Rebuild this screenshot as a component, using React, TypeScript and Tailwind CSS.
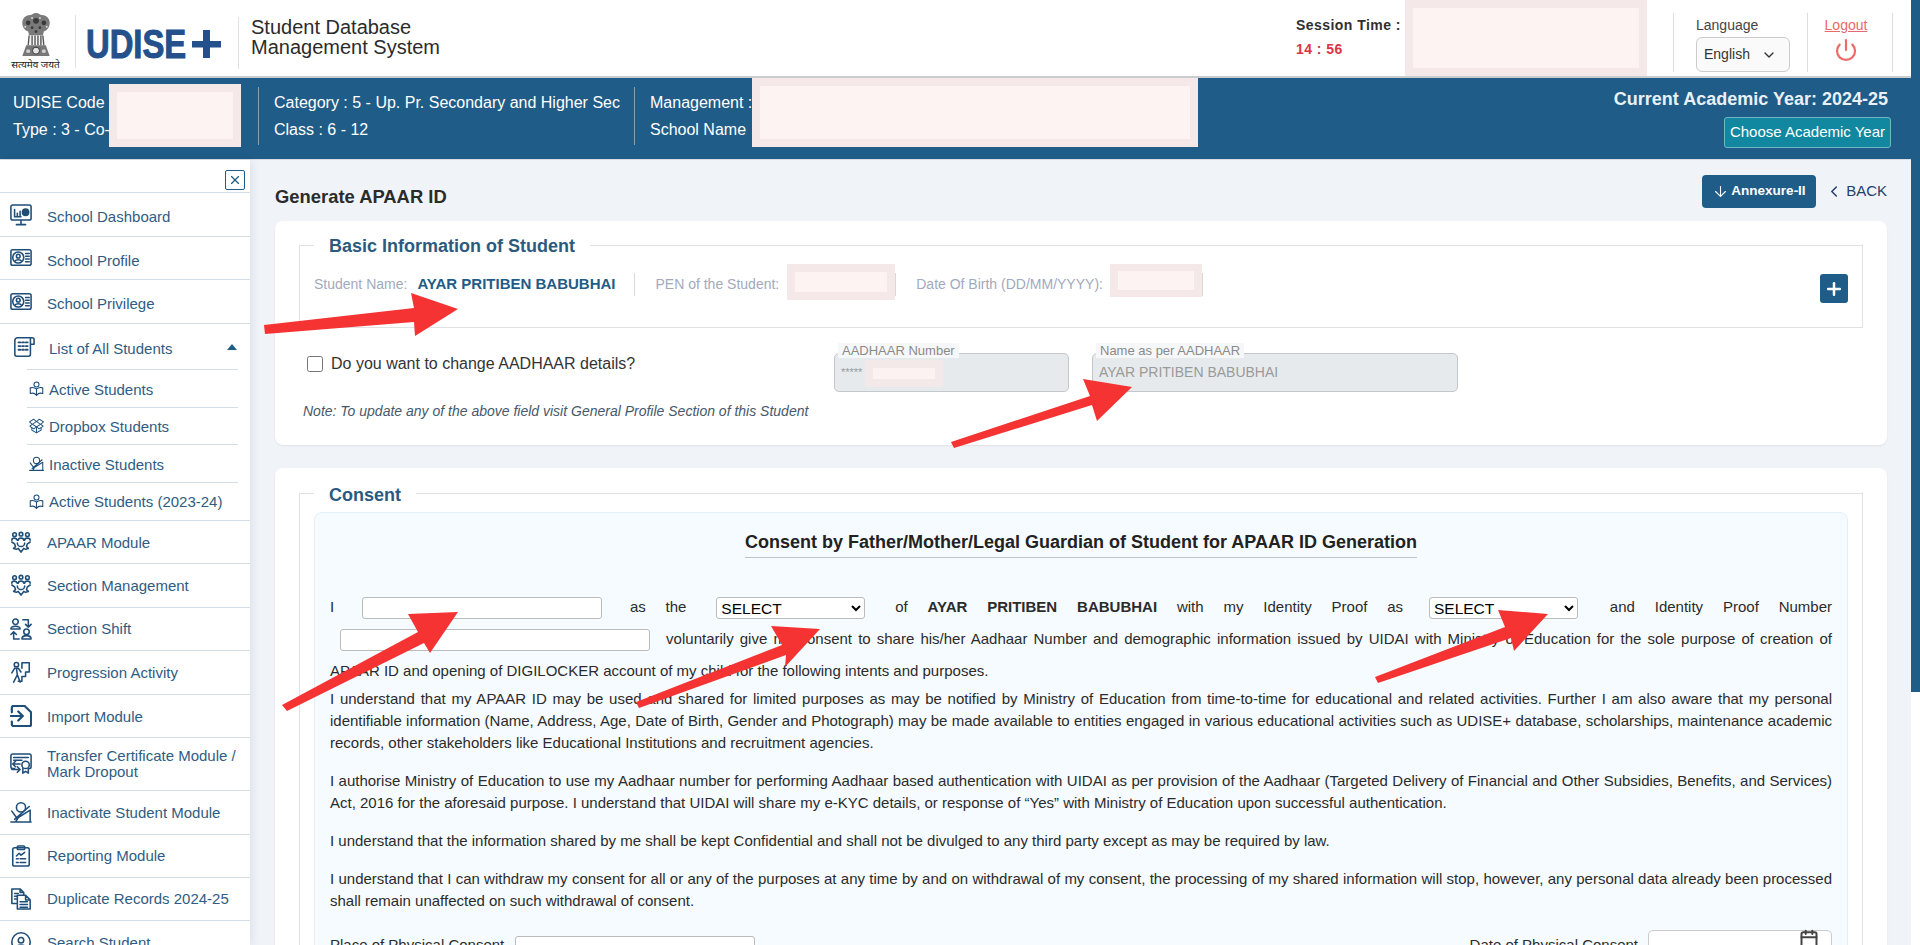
import React from "react";
import { ChevronDown, Power, ArrowDown, ChevronLeft, X, Plus, Calendar } from "lucide-react";
import { SlSocialDropbox } from "react-icons/sl";

const S = { fill: "none", stroke: "#1f4e79", strokeWidth: 1.7, strokeLinecap: "round" as const, strokeLinejoin: "round" as const };

function Ic({ children, className = "w-[22px] h-[22px]" }: { children: React.ReactNode; className?: string }) {
  return <svg viewBox="0 0 24 24" className={className} {...S}>{children}</svg>;
}
const Dash = () => <Ic><rect x="1" y="1" width="22" height="16.5" rx="2" /><path d="M12 18v4M7 22.5h10M5 6v8h7M8 14v-4M11 14v-6" /><circle cx="17" cy="9" r="3.4" fill="#1f4e79" /></Ic>;
const Prof = () => <Ic><rect x="1" y="3" width="22" height="17" rx="2" /><circle cx="9" cy="11.5" r="6" /><circle cx="9" cy="10" r="2" /><path d="M5.5 15.5c1-2 6-2 7 0M17 7h4M17 10h4M17 13h4M17 16h4" /></Ic>;
const ListI = () => <Ic><path d="M5 2h14v18a2 2 0 0 1-2 2H4a2 2 0 0 1-2-2V5a3 3 0 0 1 3-3zM19 2h2a2 2 0 0 1 2 2v5h-4" /><path d="M6 7h2M10 7h2M14 7h2M6 11h2M10 11h2M14 11h2M6 15h2M10 15h2M14 15h2" strokeWidth="2" /></Ic>;
const Active = () => <Ic className="w-[15px] h-[15px]"><circle cx="12" cy="5.5" r="4" /><path d="M12 13v10M12 13c-3-3-7-3-10-2v9c3-1 7-1 10 3 3-4 7-4 10-3v-9c-3-1-7-1-10 2z" /></Ic>;
const Inactive = ({ big }: { big?: boolean }) => <Ic className={big ? "w-[22px] h-[22px]" : "w-[15px] h-[15px]"}><circle cx="12" cy="7" r="5" /><path d="M1 23h22M2 11l5 7M21 6L5 20M9 18l13-8v13H6z" /></Ic>;
const Gear = () => <Ic><circle cx="5" cy="4" r="2" /><circle cx="12" cy="3.5" r="2" /><circle cx="19" cy="4" r="2" /><path d="M2 10c0-3 5-3 6 0M9 10c0-3 6-3 6 0M16 10c0-3 6-3 6 0" /><path d="M2 12l3 2 1 3-2 2 3 1 2-1 3 4 3-4 2 1 3-1-2-2 1-3 3-2" /><path d="M8 13a4 4 0 0 0 8 0" /></Ic>;
const Shift = () => <Ic><circle cx="6" cy="4" r="3" /><path d="M1 12c0-4 10-4 10 0zM14 2h6v7M17 7l3 3 3-3" /><circle cx="18" cy="15" r="3" /><path d="M13 23c0-5 10-5 10 0zM10 23H4v-7M1 18l3-3 3 3" /></Ic>;
const Prog = () => <Ic><circle cx="7" cy="4" r="2.4" /><path d="M5 8l-3 5M5 8h4l3 4M7 8l1 7-4 8M8 15l3 8M13 8V2h8v10h-4v5h-4v5H9" /></Ic>;
const Imp = () => <Ic><path d="M2 8V3a2 2 0 0 1 2-2h12l7 7v13a2 2 0 0 1-2 2H4a2 2 0 0 1-2-2v-3M1 12h12M9 7l5 5-5 5" strokeWidth="2.4" /></Ic>;
const Trans = () => <Ic><path d="M5 17H3a2 2 0 0 1-2-2V3a2 2 0 0 1 2-2h18a2 2 0 0 1 2 2v12a2 2 0 0 1-2 2M4 5h16M4 8h9M11 12H3M6 9l-3 3 3 3M2 18h9M8 15l3 3-3 3" /><circle cx="17" cy="13" r="4" /><path d="M14 17v5l3-2 3 2v-5" /></Ic>;
const Report = () => <Ic><rect x="3" y="3" width="18" height="20" rx="2" /><rect x="8" y="1" width="8" height="4" rx="1" /><path d="M7 12l3-3 2 2 4-3M7 15h2M11 15h6M7 19h2M11 19h6" /></Ic>;
const Dup = () => <Ic><path d="M7 17H2V1h9l4 4v3M11 1v4h4M5 6h4M5 9h3M5 12h2" /><path d="M8 8h9l5 5v10H8zM17 8v5h5M11 15h8M11 18h8M11 21h8" /></Ic>;
const Search = () => <Ic><circle cx="12" cy="12" r="10" /><circle cx="12" cy="10" r="3" /><path d="M6 19c1-5 11-5 12 0" /></Ic>;

function Item({ icon, label, h, pad = "pt-[1px]" }: { icon: React.ReactNode; label: React.ReactNode; h: string; pad?: string }) {
  return (
    <div className={`flex items-center pl-[10px] pr-2 border-b border-[#d3dde6] ${h}`}>
      <span className="w-[37px] shrink-0 flex">{icon}</span>
      <span className={`leading-[16px] ${pad}`}>{label}</span>
    </div>
  );
}
function Sub({ icon, label, last }: { icon: React.ReactNode; label: string; last?: boolean }) {
  return (
    <div className={`ml-[27px] mr-3 flex items-center ${last ? "h-[37px]" : "h-[37.5px] border-b border-[#d3dde6]"}`}>
      <span className="w-[22px] shrink-0 flex justify-center pl-[2px] pr-[5px]">{icon}</span>
      <span className="pt-[3px]">{label}</span>
    </div>
  );
}
function Redact({ className, inner = "m-[8px]" }: { className: string; inner?: string }) {
  return <div className={`bg-[#f4e9e8] shrink-0 flex ${className}`}><div className={`flex-1 bg-[#fdf3f2] ${inner}`} /></div>;
}
function Emblem() {
  return (
    <svg viewBox="0 0 30 46" className="w-[30px] h-[46px]">
      <path d="M15 0c3 0 4 2 6 2 4 0 8 3 8 8 0 5-3 8-6 9l-1 4H8l-1-4c-3-1-6-4-6-9 0-5 4-8 8-8 2 0 3-2 6-2z" fill="#7a7a7a" />
      <g fill="#3a3a3a"><circle cx="15" cy="8" r="3" /><circle cx="7" cy="10" r="2.4" /><circle cx="23" cy="10" r="2.4" /><circle cx="11" cy="15" r="1.4" /><circle cx="19" cy="15" r="1.4" /><circle cx="15" cy="19" r="1.4" /></g>
      <g fill="#d8d8d8"><circle cx="11" cy="5" r="1" /><circle cx="19" cy="5" r="1" /><circle cx="4" cy="14" r="1" /><circle cx="26" cy="14" r="1" /></g>
      <rect x="7" y="23" width="16" height="10" fill="#f4f4f4" />
      <path d="M8 23l-1 10M11 23v10M14 23v10M17 23v10M20 23v10M22 23l1 10" stroke="#555" strokeWidth="1.4" />
      <path d="M5 33h20l4 11H1z" fill="#777" />
      <circle cx="15" cy="38.5" r="3.6" fill="#e4e4e4" stroke="#333" />
      <circle cx="7" cy="39" r="2" fill="#cfcfcf" /><circle cx="23" cy="39" r="2" fill="#cfcfcf" />
    </svg>
  );
}
function Arrows() {
  return (
    <svg className="absolute inset-0 w-full h-full pointer-events-none" viewBox="0 0 1920 945" fill="#f53333">
      <polygon points="264,325 414,308 411,293 458,309 415,336 414,322 265,334" />
      <polygon points="951,442 1090,396 1083,379 1132,387 1097,421 1092,405 954,448" />
      <polygon points="282,705 418,632 408,614 458,612 430,653 424,643 287,711" />
      <polygon points="636,702 782,645 771,626 820,629 785,667 786,655 639,708" />
      <polygon points="1375,677 1505,627 1498,610 1548,614 1514,651 1511,638 1378,683" />
    </svg>
  );
}
function Field({ label, w, children }: { label: string; w: string; children: React.ReactNode }) {
  return (
    <div className={`relative ${w} h-[39px] bg-[#e7eaed] border border-[#c4c8cc] rounded-[5px] flex items-center px-[6px] text-[#9a9a9a] text-[14px]`}>
      <span className="absolute -top-[11px] left-[3px] px-[4px] text-[13px] leading-[15px] h-[15px] bg-[#f6f7f8] text-[#8a8a8a] whitespace-nowrap">{label}</span>
      {children}
    </div>
  );
}

export default function App() {
  return (
    <div className="relative w-full h-[945px] overflow-hidden flex font-['Liberation_Sans',Arial,sans-serif] text-[#212529] bg-white">
      <div className="flex-1 min-w-0 flex flex-col">
        {/* top header */}
        <header className="h-[78px] shrink-0 bg-white border-b-2 border-[#c9cdd0] flex items-start">
          <div className="w-[75px] shrink-0 pt-[13px] h-[70px] flex flex-col items-center pr-[4px]">
            <Emblem />
            <span className="text-[10px] leading-[11px] mt-[1px] whitespace-nowrap text-[#222] font-['Noto_Sans',sans-serif]">सत्यमेव जयते</span>
          </div>
          <div className="mt-[15px] w-px h-[53px] bg-[#e2e2e2]" />
          <div className="w-[162px] shrink-0 pl-[10px] mt-[26px] flex items-center h-[36px]">
            <span className="font-bold text-[40px] leading-[36px] text-[#24508c] inline-block w-[100px] origin-left scale-x-[0.82] [-webkit-text-stroke:1px_#24508c]">UDISE</span>
            <svg viewBox="0 0 29 28" className="w-[29px] h-[28px] ml-[6px]"><path d="M0 11h29v6.5H0zM11 0h7v28h-7z" fill="#24508c" /></svg>
          </div>
          <div className="mt-[17px] w-px h-[52px] bg-[#e2e2e2]" />
          <div className="pl-[12px] mt-[17px] text-[20px] leading-[20px] text-[#2b2b2b]">
            Student Database<br />Management System
          </div>
          <div className="flex-1" />
          <div className="w-[110px] shrink-0 pt-[17px] font-bold text-[14px] tracking-[0.45px]">
            <div className="leading-[16px] text-[#2f2f2f]">Session Time :</div>
            <div className="leading-[16px] mt-[8px] text-[#dc3545]">14 : 56</div>
          </div>
          <Redact className="w-[242px] h-[76px] -ml-[1px]" inner="mx-[8px] mt-[8px] mb-[8px]" />
          <div className="w-[26px]" />
          <div className="mt-[13px] w-px h-[59px] bg-[#dddddd]" />
          <div className="w-[133px] shrink-0 pl-[22px] pt-[17px] text-[14px] text-[#444]">
            <div className="leading-[16px]">Language</div>
            <div className="mt-[4px] w-[94px] h-[35px] border border-[#ccc] rounded-[6px] bg-[#fafafa] flex items-center justify-between pl-[7px] pr-[12px] text-[#333]">
              English <ChevronDown size={16} />
            </div>
          </div>
          <div className="mt-[13px] w-px h-[59px] bg-[#dddddd]" />
          <div className="w-[84px] shrink-0 pt-[17px] pr-[8px] text-center text-[14px] text-[#e96a6a]">
            <div className="underline leading-[16px]">Logout</div>
            <Power size={24} className="mx-auto mt-[5px]" color="#ef6a66" strokeWidth={2.2} />
          </div>
          <div className="mt-[13px] w-px h-[59px] bg-[#dddddd]" />
          <div className="w-[18px]" />
        </header>

        {/* blue bar */}
        <div className="h-[82px] shrink-0 bg-[#1f5c87] border-b border-[#d8dde2] text-white flex items-start text-[16px]">
          <div className="w-[109px] pl-[13px] pt-[14px] whitespace-nowrap shrink-0">
            <div className="leading-[22px]">UDISE Code</div>
            <div className="leading-[22px] mt-[5px]">Type : 3 - Co-</div>
          </div>
          <Redact className="w-[132px] h-[63px] mt-[6px]" />
          <div className="w-[17px]" />
          <div className="mt-[9px] w-px h-[58px] bg-[#7fa2bb]" />
          <div className="w-[375px] shrink-0 pl-[15px] pt-[14px] whitespace-nowrap">
            <div className="leading-[22px]">Category : 5 - Up. Pr. Secondary and Higher Sec</div>
            <div className="leading-[22px] mt-[5px]">Class : 6 - 12</div>
          </div>
          <div className="mt-[9px] w-px h-[58px] bg-[#7fa2bb]" />
          <div className="w-[117px] shrink-0 pl-[15px] pt-[14px] whitespace-nowrap">
            <div className="leading-[22px]">Management :</div>
            <div className="leading-[22px] mt-[5px]">School Name</div>
          </div>
          <Redact className="w-[446px] h-[69px]" />
          <div className="flex-1 flex flex-col items-end pr-[20px] pt-[11px]">
            <div className="font-bold text-[18px] leading-[20px] text-[#e8f1f7] pr-[3px]">Current Academic Year: 2024-25</div>
            <div className="mt-[8px] w-[167px] h-[31px] rounded-[3px] bg-[#11889f] border border-[#6fb7c4] flex items-center justify-center text-[15px]">Choose Academic Year</div>
          </div>
        </div>

        <div className="flex-1 min-h-0 flex">
          {/* sidebar */}
          <aside className="relative z-10 w-[250px] shrink-0 bg-white overflow-hidden text-[15px] text-[#2f5c83] shadow-[3px_0_8px_rgba(0,0,0,0.07)]">
            <div className="h-[33px] border-b border-[#d3dde6] flex justify-end items-start pt-[10px] pr-[5px]">
              <div className="w-[20px] h-[20px] border border-[#1f5c87] rounded-[2px] flex items-center justify-center"><X size={14} color="#1f5c87" /></div>
            </div>
            <Item h="h-[44px]" pad="pt-[4px]" icon={<Dash />} label="School Dashboard" />
            <Item h="h-[43px]" pad="pt-[5px]" icon={<Prof />} label="School Profile" />
            <Item h="h-[44px]" pad="pt-[4px]" icon={<Prof />} label="School Privilege" />
            <div className="border-b border-[#d3dde6]">
              <div className="h-[45px] flex items-center pl-[13px] pr-[13px]">
                <span className="w-[36px] shrink-0 flex"><ListI /></span>
                <span className="flex-1 pt-[5px]">List of All Students</span>
                <span className="w-0 h-0 border-l-[5px] border-r-[5px] border-b-[6px] border-l-transparent border-r-transparent border-b-[#1f5c87]" />
              </div>
              <div className="ml-[27px] mr-3 border-b border-[#d3dde6]" />
              <Sub icon={<Active />} label="Active Students" />
              <Sub icon={<SlSocialDropbox size={16} color="#1f4e79" />} label="Dropbox Students" />
              <Sub icon={<Inactive />} label="Inactive Students" />
              <Sub last icon={<Active />} label="Active Students (2023-24)" />
            </div>
            <Item h="h-[43px]" pad="pt-[2px]" icon={<Gear />} label="APAAR Module" />
            <Item h="h-[44px]" icon={<Gear />} label="Section Management" />
            <Item h="h-[43px]" icon={<Shift />} label="Section Shift" />
            <Item h="h-[44px]" icon={<Prog />} label="Progression Activity" />
            <Item h="h-[43px]" pad="pt-[2px]" icon={<Imp />} label="Import Module" />
            <Item h="h-[53px]" icon={<Trans />} label={<>Transfer Certificate Module /<br />Mark Dropout</>} />
            <Item h="h-[44px]" icon={<Inactive big />} label="Inactivate Student Module" />
            <Item h="h-[43px]" icon={<Report />} label="Reporting Module" />
            <Item h="h-[43px]" icon={<Dup />} label="Duplicate Records 2024-25" />
            <Item h="h-[44px]" icon={<Search />} label="Search Student" />
          </aside>

          {/* main */}
          <main className="flex-1 min-w-0 bg-[#f0f4f9] pl-[25px] pr-[24px] overflow-hidden">
            <div className="h-[61px] flex items-start">
              <h1 className="font-bold text-[18.4px] leading-[24px] mt-[25px] text-[#2b2b2b] flex-1">Generate APAAR ID</h1>
              <div className="mt-[15px] w-[114px] h-[33px] rounded-[4px] bg-[#1f5c87] text-white font-bold text-[13.5px] flex items-center justify-center gap-[2px]">
                <ArrowDown size={17} strokeWidth={1.5} /> Annexure-II
              </div>
              <div className="mt-[15px] ml-[12px] h-[33px] w-[59px] flex items-center text-[#24406e] text-[15px] whitespace-nowrap gap-[3px]">
                <ChevronLeft size={19} className="-ml-[3px]" /> BACK
              </div>
            </div>

            {/* card 1 */}
            <section className="h-[224px] bg-white rounded-[8px] shadow-[0_1px_2px_rgba(0,0,0,0.08)] px-[24px] pt-[13px]">
              <fieldset className="border border-[#e1e1e1] h-[94px] px-[14px]">
                <legend className="px-[15px] text-[18px] leading-[22px] font-bold text-[#2c5a7f]"><span className="relative top-[1px]">Basic Information of Student</span></legend>
                <div className="flex items-center h-[57px] text-[14px] text-[#a3a9bd]">
                  <span>Student Name:</span>
                  <span className="ml-[10px] font-bold text-[15px] text-[#1f5c87]">AYAR PRITIBEN BABUBHAI</span>
                  <div className="ml-[19px] w-px h-[23px] bg-[#d9d9d9]" />
                  <span className="ml-[20px]">PEN of the Student:</span>
                  <Redact className="w-[108px] h-[36px] ml-[8px] -mt-[5px]" inner="mx-[8px] my-[8px]" />
                  <div className="w-px h-[23px] bg-[#d9d9d9]" />
                  <span className="ml-[20px]">Date Of Birth (DD/MM/YYYY):</span>
                  <Redact className="w-[92px] h-[33px] ml-[7px] -mt-[8px]" inner="mx-[8px] my-[7px]" />
                  <div className="w-px h-[23px] bg-[#d9d9d9]" />
                  <div className="flex-1" />
                  <div className="w-[28px] h-[29px] mt-[8px] rounded-[3px] bg-[#1f5c87] flex items-center justify-center"><Plus size={20} color="white" strokeWidth={3} /></div>
                </div>
              </fieldset>
              <div className="flex mt-[25px]">
                <div className="w-[535px] shrink-0">
                  <label className="flex items-center h-[20px] mt-[1px] ml-[8px] text-[16px] text-[#333]">
                    <input type="checkbox" className="w-[16px] h-[16px] mr-[8px]" />
                    Do you want to change AADHAAR details?
                  </label>
                  <div className="mt-[27px] ml-[4px] italic text-[14px] leading-[20px] text-[#47596a] whitespace-nowrap">Note: To update any of the above field visit General Profile Section of this Student</div>
                </div>
                <Field label="AADHAAR Number" w="w-[235px]">
                  <span className="text-[11px]">*****</span>
                  <Redact className="absolute left-[30px] top-[6px] w-[78px] h-[27px] opacity-95" inner="mx-[8px] my-[8px]" />
                </Field>
                <div className="w-[23px]" />
                <Field label="Name as per AADHAAR" w="w-[366px]">AYAR PRITIBEN BABUBHAI</Field>
              </div>
            </section>

            {/* card 2 */}
            <section className="mt-[23px] bg-white rounded-[8px] shadow-[0_1px_2px_rgba(0,0,0,0.08)] px-[24px] pt-[14px] h-[600px]">
              <fieldset className="border border-[#e1e1e1] px-[14px] h-[560px]">
                <legend className="px-[15px] text-[18px] leading-[22px] font-bold text-[#2c5a7f]"><span className="relative top-[2px]">Consent</span></legend>
                <div className="mt-[8px] bg-[#f6fbff] border border-[#e3f0fa] rounded-[8px] px-[15px] pt-[18px] text-[15px] text-[#2b2b2b]">
                  <div className="text-center">
                    <h2 className="inline-block font-bold text-[18px] leading-[22px] pb-[4px] border-b border-[#bfc4c9] text-[#222]">Consent by Father/Mother/Legal Guardian of Student for APAAR ID Generation</h2>
                  </div>
                  <div className="mt-[33px] text-justify [text-align-last:justify] leading-[32px]">
                    I <input className="mx-[8px] w-[240px] h-[22px] bg-white border border-[#bbb] rounded-[3px] align-middle" /> as the{" "}
                    <select className="mx-[10px] w-[149px] h-[22px] bg-white border border-[#bbb] rounded-[3px] align-middle text-[15.5px] text-black"><option>SELECT</option></select> of{" "}
                    <b>AYAR PRITIBEN BABUBHAI</b> with my Identity Proof as{" "}
                    <select className="ml-[6px] mr-[12px] w-[149px] h-[22px] bg-white border border-[#bbb] rounded-[3px] align-middle text-[15.5px] text-black"><option>SELECT</option></select> and Identity Proof Number{" "}
                    <input className="ml-[10px] mr-[10px] w-[310px] h-[22px] bg-white border border-[#bbb] rounded-[3px] align-middle" /> voluntarily give my consent to share his/her Aadhaar Number and demographic information issued by UIDAI with Ministry of Education for the sole purpose of creation of
                  </div>
                  <div className="leading-[32px]">APAAR ID and opening of DIGILOCKER account of my child for the following intents and purposes.</div>
                  <div className="text-justify leading-[22px]">
                    <p className="mb-[16px] mt-[1px]">I understand that my APAAR ID may be used and shared for limited purposes as may be notified by Ministry of Education from time-to-time for educational and related activities. Further I am also aware that my personal identifiable information (Name, Address, Age, Date of Birth, Gender and Photograph) may be made available to entities engaged in various educational activities such as UDISE+ database, scholarships, maintenance academic records, other stakeholders like Educational Institutions and recruitment agencies.</p>
                    <p className="mb-[16px]">I authorise Ministry of Education to use my Aadhaar number for performing Aadhaar based authentication with UIDAI as per provision of the Aadhaar (Targeted Delivery of Financial and Other Subsidies, Benefits, and Services) Act, 2016 for the aforesaid purpose. I understand that UIDAI will share my e-KYC details, or response of “Yes” with Ministry of Education upon successful authentication.</p>
                    <p className="mb-[16px]">I understand that the information shared by me shall be kept Confidential and shall not be divulged to any third party except as may be required by law.</p>
                    <p className="mb-[16px]">I understand that I can withdraw my consent for all or any of the purposes at any time by and on withdrawal of my consent, the processing of my shared information will stop, however, any personal data already been processed shall remain unaffected on such withdrawal of consent.</p>
                  </div>
                  <div className="flex items-start">
                    <span className="mt-[6px]">Place of Physical Consent</span>
                    <div className="ml-[11px] mt-[8px] w-[240px] h-[24px] bg-white border border-[#bbb] rounded-[3px]" />
                    <div className="flex-1" />
                    <span className="mt-[6px]">Date of Physical Consent</span>
                    <div className="ml-[10px] mt-[2px] w-[184px] h-[30px] bg-white border border-[#ccc] rounded-[5px] flex justify-end pr-[12px]"><Calendar size={20} color="#444" strokeWidth={2.4} className="-mt-[2px]" /></div>
                  </div>
                </div>
              </fieldset>
            </section>
          </main>
        </div>
      </div>
      {/* page scrollbar */}
      <div className="w-[9px] shrink-0 bg-white"><div className="h-[692px] bg-[#1f5c87]" /></div>
      <Arrows />
    </div>
  );
}
